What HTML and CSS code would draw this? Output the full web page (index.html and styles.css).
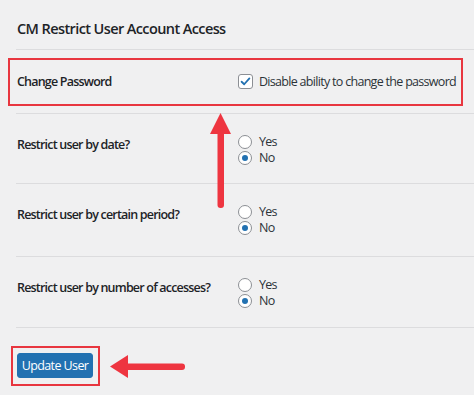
FILE: index.html
```html
<!DOCTYPE html>
<html lang="en">
<head>
<meta charset="utf-8">
<title>CM Restrict User Account Access</title>
<link rel="stylesheet" href="styles.css">
</head>
<body>
<div class="page">
  <h2 class="title">CM Restrict User Account Access</h2>
  <div class="row row-center">
    <div class="label">Change Password</div>
    <label class="field check-field">
      <span class="checkbox"><svg viewBox="0 0 16 16" width="13" height="13"><path d="M3.2 8.3 L6.4 11.4 L12.8 4.2" fill="none" stroke="#2271b1" stroke-width="2.2" stroke-linecap="round" stroke-linejoin="round"/></svg></span>
      <span>Disable ability to change the password</span>
    </label>
  </div>
  <div class="row row-date">
    <div class="label label-top">Restrict user by date?</div>
    <div class="field radios">
      <label class="opt"><span class="radio"></span>Yes</label>
      <label class="opt"><span class="radio checked"></span>No</label>
    </div>
  </div>
  <div class="row row-period">
    <div class="label label-top">Restrict user by certain period?</div>
    <div class="field radios">
      <label class="opt"><span class="radio"></span>Yes</label>
      <label class="opt"><span class="radio checked"></span>No</label>
    </div>
  </div>
  <div class="row row-access">
    <div class="label label-top">Restrict user by number of accesses?</div>
    <div class="field radios">
      <label class="opt"><span class="radio"></span>Yes</label>
      <label class="opt"><span class="radio checked"></span>No</label>
    </div>
  </div>
  <div class="actions">
    <button class="btn" type="button">Update User</button>
  </div>

  <div class="mark mark-row"></div>
  <div class="mark mark-btn"></div>
  <svg class="arrow arrow-up" width="24" height="98" viewBox="0 0 24 98">
    <polygon points="11.5,1 1,22 22,22" fill="#ee3540"/>
    <rect x="8.5" y="18" width="6.5" height="78" rx="3" fill="#ee3540"/>
  </svg>
  <svg class="arrow arrow-left" width="78" height="26" viewBox="0 0 78 26">
    <polygon points="1,12.5 19,1 19,24" fill="#ee3540"/>
    <rect x="15" y="9.5" width="61" height="6.5" rx="3" fill="#ee3540"/>
  </svg>
</div>
</body>
</html>
```
FILE: styles.css
```css
html, body {
  margin: 0;
  padding: 0;
}
body {
  background: #f0f0f1;
  font-family: "Open Sans", "Noto Sans", "Liberation Sans", sans-serif;
  color: #1d2327;
  font-size: 12.5px;
  letter-spacing: -0.7px;
  width: 474px;
  height: 395px;
  overflow: hidden;
  white-space: nowrap;
}
.page {
  position: relative;
  padding-left: 16px;
  height: 395px;
  box-sizing: border-box;
}
.title {
  margin: 0;
  padding: 19px 0 10px 1px;
  font-size: 14.5px;
  letter-spacing: -0.6px;
  line-height: 20px;
  font-weight: 600;
  border-bottom: 1px solid #dcdcde;
  color: #1d2327;
}
.row {
  display: flex;
  border-bottom: 1px solid #dcdcde;
  padding-left: 1px;
}
.row-center {
  align-items: center;
  height: 63px;
}
.row-date { padding: 20px 0 17px 1px; }
.row-period { padding: 20px 0 20px 1px; }
.row-access { padding: 20px 0 18px 1px; }
.label {
  width: 221px;
  font-weight: 600;
  letter-spacing: -0.8px;
  line-height: 20px;
  flex: none;
}
.label-top {
  margin-top: 1px;
}
.field {
  display: flex;
  align-items: center;
}
.check-field {
  gap: 6px;
  color: #2c3338;
}
.checkbox {
  width: 13px;
  height: 13px;
  border: 1px solid #8c8f94;
  border-radius: 3px;
  background: #fff;
  display: flex;
  align-items: center;
  justify-content: center;
}
.radios {
  flex-direction: column;
  align-items: flex-start;
}
.opt {
  display: flex;
  align-items: center;
  gap: 7px;
  height: 16px;
  line-height: 16px;
  color: #2c3338;
}
.radio {
  box-sizing: border-box;
  width: 14px;
  height: 14px;
  border: 1px solid #8c8f94;
  border-radius: 50%;
  background: #fff;
  display: flex;
  align-items: center;
  justify-content: center;
}
.radio.checked::after {
  content: "";
  width: 6px;
  height: 6px;
  border-radius: 50%;
  background: #2271b1;
}
.actions {
  padding-top: 25px;
  padding-left: 1px;
}
.btn {
  font-family: inherit;
  font-size: 12.5px;
  letter-spacing: -0.6px;
  color: #fff;
  background: #2271b1;
  border: 1px solid #2271b1;
  border-radius: 3px;
  height: 25px;
  width: 76px;
  padding: 0;
  line-height: 23px;
  white-space: nowrap;
}
.mark {
  position: absolute;
  border: 2px solid #e8363f;
  box-sizing: border-box;
}
.mark-row {
  left: 8px;
  top: 58px;
  width: 455px;
  height: 48px;
}
.mark-btn {
  left: 11px;
  top: 346px;
  width: 89px;
  height: 40px;
}
.arrow {
  position: absolute;
}
.arrow-up {
  left: 209px;
  top: 112px;
}
.arrow-left {
  left: 109px;
  top: 354px;
}
```
